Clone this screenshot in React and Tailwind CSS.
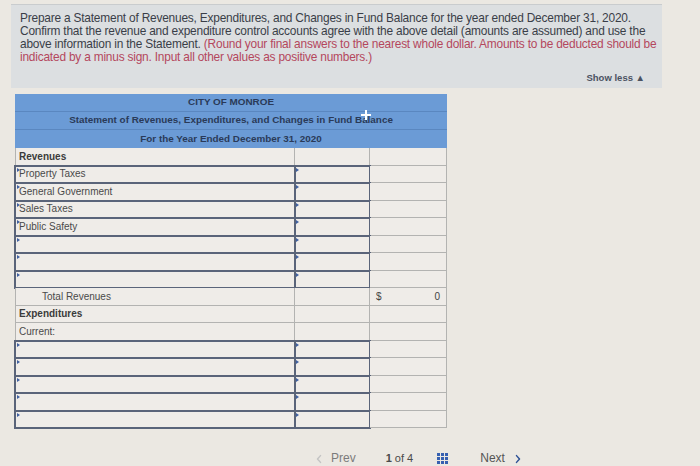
import React from 'react';

const rows = [
  { label: 'Revenues', bold: true },
  { label: 'Property Taxes', input: true },
  { label: 'General Government', input: true },
  { label: 'Sales Taxes', input: true },
  { label: 'Public Safety', input: true },
  { label: '', input: true },
  { label: '', input: true },
  { label: '', input: true },
  { label: 'Total Revenues', total: true },
  { label: 'Expenditures', bold: true },
  { label: 'Current:' },
  { label: '', input: true },
  { label: '', input: true },
  { label: '', input: true },
  { label: '', input: true },
  { label: '', input: true },
];

function InputMark() {
  return <span className="absolute left-[1px] top-[2px] w-0 h-0 border-y-[2px] border-y-transparent border-l-[3px] border-l-[#3f5fa0]"></span>;
}

function Row({ row }) {
  const cell = 'relative h-[17.5px] border-r border-b border-[#b3b3b1] bg-[#efece8]';
  const inputBox = 'outline-2 outline-[#5a6479] -outline-offset-1';
  return (
    <div className="grid grid-cols-[280px_75px_77px]">
      <div className={`${cell} border-l flex items-center ${row.input ? inputBox : ''} ${row.total ? 'pl-[26px]' : 'pl-[3px]'}`}>
        {row.input && <InputMark />}
        <span className={`text-[10px] ${row.bold ? 'font-bold text-[#3b3b3b] text-[9.6px]' : 'text-[#4a4a4a]'}`}>{row.label}</span>
      </div>
      <div className={`${cell} ${row.input ? inputBox : ''}`}>
        {row.input && <InputMark />}
      </div>
      <div className={`${cell} flex items-center justify-between px-[6px] text-[10px] text-[#444]`}>
        {row.total && (
          <>
            <span>$</span>
            <span>0</span>
          </>
        )}
      </div>
    </div>
  );
}

function Chevron({ dir, className }) {
  return (
    <svg viewBox="0 0 8 12" className={className} fill="none" stroke="currentColor" strokeWidth="2" strokeLinecap="round" strokeLinejoin="round">
      {dir === 'left' ? <path d="M6 1.5 L2 6 L6 10.5" /> : <path d="M2 1.5 L6 6 L2 10.5" />}
    </svg>
  );
}

export default function App() {
  return (
    <div className="relative w-[700px] h-[466px] overflow-hidden bg-[#ebe8e2] font-['Liberation_Sans',Arial,sans-serif]">
      {/* Question panel */}
      <div className="pt-[4px] pl-[11px]">
        <div className="w-[651px] h-[84px] bg-[#dcdfe1] border-t border-[#c9ccce] pl-[9px] pr-[17px] pt-[7px]">
          <p className="text-[11.9px] leading-[13px] text-[#3a3e48] whitespace-nowrap tracking-[-0.2px]">
            Prepare a Statement of Revenues, Expenditures, and Changes in Fund Balance for the year ended December 31, 2020.
            <br />
            Confirm that the revenue and expenditure control accounts agree with the above detail (amounts are assumed) and use the
            <br />
            above information in the Statement. <span className="text-[#b4475d]">(Round your final answers to the nearest whole dollar. Amounts to be deducted should be</span>
            <br />
            <span className="text-[#b4475d]">indicated by a minus sign. Input all other values as positive numbers.)</span>
          </p>
          <div className="flex justify-end mt-[7px]">
            <span className="text-[9.5px] font-bold text-[#4b5262]">Show less ▲</span>
          </div>
        </div>
      </div>

      {/* Statement table */}
      <div className="ml-[15px] mt-[6px] w-[432px]">
        <div className="bg-[#6b9bd6] text-[#2a3a58] font-bold text-[9.9px] text-center">
          <div className="h-[18px] flex items-center justify-center border-b border-[#5a87c0]">CITY OF MONROE</div>
          <div className="h-[18px] flex items-center justify-center border-b border-[#5a87c0]">Statement of Revenues, Expenditures, and Changes in Fund Balance</div>
          <div className="h-[18px] flex items-center justify-center">For the Year Ended December 31, 2020</div>
        </div>
        {rows.map((r, i) => (
          <Row key={i} row={r} />
        ))}
      </div>

      {/* cursor */}
      <div className="absolute left-[361px] top-[110px] w-[10px] h-[10px]">
        <div className="absolute left-[4px] top-0 w-[2px] h-[10px] bg-white"></div>
        <div className="absolute left-0 top-[4px] w-[10px] h-[2px] bg-white"></div>
      </div>

      {/* Pager */}
      <div className="absolute left-0 top-[451px] w-full flex items-center text-[12px] leading-[15px]">
        <div className="ml-[316px] flex items-center gap-[9px]">
          <Chevron dir="left" className="w-[6px] h-[10px] text-[#c4c4c4]" />
          <span className="text-[#7b7b7b]">Prev</span>
        </div>
        <div className="ml-[30px] text-[#4a4a4a] text-[11px]">
          <span className="font-bold">1</span> of 4
        </div>
        <div className="ml-[24px] grid grid-cols-3 gap-[1px]">
          {Array.from({ length: 9 }).map((_, i) => (
            <span key={i} className="w-[3px] h-[3px] bg-[#3660b0]"></span>
          ))}
        </div>
        <div className="ml-[32px] flex items-center gap-[10px]">
          <span className="text-[#555]">Next</span>
          <Chevron dir="right" className="w-[6px] h-[10px] text-[#2e5296]" />
        </div>
      </div>
    </div>
  );
}
